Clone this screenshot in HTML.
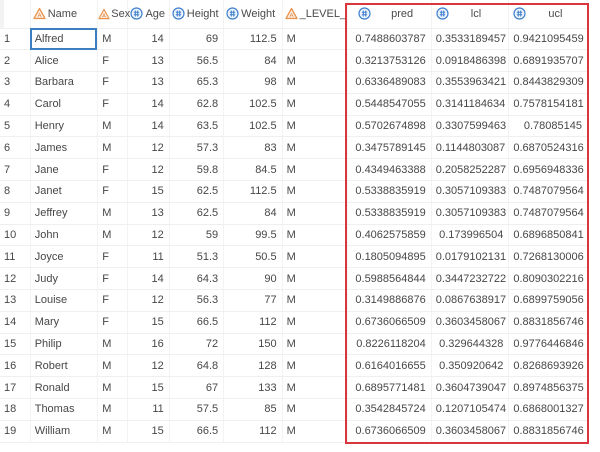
<!DOCTYPE html>
<html><head><meta charset="utf-8"><style>
*{margin:0;padding:0;box-sizing:border-box}
body{width:600px;height:452px;background:#fff;font-family:"Liberation Sans",Arial,sans-serif;font-size:11px;color:#474747;position:relative;overflow:hidden}
table{border-collapse:collapse;table-layout:fixed;position:absolute;left:0;top:0;width:588px}
td,th{height:21.8px;border-bottom:1px solid #efefef;border-right:1px solid #f3f3f3;white-space:nowrap;overflow:hidden;padding:0 4px;font-weight:normal}
th{height:28px;text-align:left;color:#4a4a4a;font-size:11px;padding:0 2px}
td.r{text-align:right;padding-right:5px}
.ic{display:inline-block;vertical-align:-3px;margin-right:2px}
.box{position:absolute;left:345px;top:3px;width:244px;height:441px;border:2px solid #d9363e}
.sel{position:absolute;left:30px;top:28px;width:67px;height:22px;border:2px solid #3c7fc1}
.side{position:absolute;left:0;top:0;width:4px;height:28px;background:#f3f3f3}
</style></head><body>
<div class="side"></div>
<table>
<colgroup><col style="width:30px"><col style="width:67px"><col style="width:30px"><col style="width:41px"><col style="width:54px"><col style="width:58px"><col style="width:65px"><col style="width:83px"><col style="width:77px"><col style="width:78px"></colgroup>
<tr><th></th>
<th><svg class="ic" width="13" height="13" viewBox="0 0 13 13"><path d="M6.5 1.5L12 11.5H1z" fill="#fdf0e6" stroke="#e8944e" stroke-width="1.3" stroke-linejoin="round"/><text x="6.5" y="10.5" font-size="6" text-anchor="middle" fill="#d9772a" font-family="Liberation Sans">A</text></svg>Name</th>
<th style="padding-left:0;overflow:visible"><svg class="ic" style="margin-right:1px" width="12" height="12" viewBox="0 0 13 13"><path d="M6.5 1.5L12 11.5H1z" fill="#fdf0e6" stroke="#e8944e" stroke-width="1.3" stroke-linejoin="round"/><text x="6.5" y="10.5" font-size="6" text-anchor="middle" fill="#d9772a" font-family="Liberation Sans">A</text></svg>Sex</th>
<th><svg class="ic" width="13" height="13" viewBox="0 0 13 13"><circle cx="6.5" cy="6.5" r="5.5" fill="#eef4fc" stroke="#3f7fcf" stroke-width="1.2"/><path d="M5.3 3.5v6M7.7 3.5v6M3.8 5.3h5.4M3.8 7.7h5.4" stroke="#3f7fcf" stroke-width="1"/></svg>Age</th>
<th><svg class="ic" width="13" height="13" viewBox="0 0 13 13"><circle cx="6.5" cy="6.5" r="5.5" fill="#eef4fc" stroke="#3f7fcf" stroke-width="1.2"/><path d="M5.3 3.5v6M7.7 3.5v6M3.8 5.3h5.4M3.8 7.7h5.4" stroke="#3f7fcf" stroke-width="1"/></svg>Height</th>
<th><svg class="ic" width="13" height="13" viewBox="0 0 13 13"><circle cx="6.5" cy="6.5" r="5.5" fill="#eef4fc" stroke="#3f7fcf" stroke-width="1.2"/><path d="M5.3 3.5v6M7.7 3.5v6M3.8 5.3h5.4M3.8 7.7h5.4" stroke="#3f7fcf" stroke-width="1"/></svg>Weight</th>
<th><svg class="ic" width="13" height="13" viewBox="0 0 13 13"><path d="M6.5 1.5L12 11.5H1z" fill="#fdf0e6" stroke="#e8944e" stroke-width="1.3" stroke-linejoin="round"/><text x="6.5" y="10.5" font-size="6" text-anchor="middle" fill="#d9772a" font-family="Liberation Sans">A</text></svg>_LEVEL_</th>
<th style="padding-left:10px"><svg class="ic" width="13" height="13" viewBox="0 0 13 13"><circle cx="6.5" cy="6.5" r="5.5" fill="#eef4fc" stroke="#3f7fcf" stroke-width="1.2"/><path d="M5.3 3.5v6M7.7 3.5v6M3.8 5.3h5.4M3.8 7.7h5.4" stroke="#3f7fcf" stroke-width="1"/></svg><span style="margin-left:18px">pred</span></th>
<th style="padding-left:4px"><svg class="ic" width="13" height="13" viewBox="0 0 13 13"><circle cx="6.5" cy="6.5" r="5.5" fill="#eef4fc" stroke="#3f7fcf" stroke-width="1.2"/><path d="M5.3 3.5v6M7.7 3.5v6M3.8 5.3h5.4M3.8 7.7h5.4" stroke="#3f7fcf" stroke-width="1"/></svg><span style="margin-left:20px">lcl</span></th>
<th style="padding-left:4px"><svg class="ic" width="13" height="13" viewBox="0 0 13 13"><circle cx="6.5" cy="6.5" r="5.5" fill="#eef4fc" stroke="#3f7fcf" stroke-width="1.2"/><path d="M5.3 3.5v6M7.7 3.5v6M3.8 5.3h5.4M3.8 7.7h5.4" stroke="#3f7fcf" stroke-width="1"/></svg><span style="margin-left:20px">ucl</span></th></tr>
<tr><td>1</td><td>Alfred</td><td>M</td><td class="r">14</td><td class="r">69</td><td class="r">112.5</td><td>M</td><td class="r">0.7488603787</td><td class="r">0.3533189457</td><td class="r">0.9421095459</td></tr>
<tr><td>2</td><td>Alice</td><td>F</td><td class="r">13</td><td class="r">56.5</td><td class="r">84</td><td>M</td><td class="r">0.3213753126</td><td class="r">0.0918486398</td><td class="r">0.6891935707</td></tr>
<tr><td>3</td><td>Barbara</td><td>F</td><td class="r">13</td><td class="r">65.3</td><td class="r">98</td><td>M</td><td class="r">0.6336489083</td><td class="r">0.3553963421</td><td class="r">0.8443829309</td></tr>
<tr><td>4</td><td>Carol</td><td>F</td><td class="r">14</td><td class="r">62.8</td><td class="r">102.5</td><td>M</td><td class="r">0.5448547055</td><td class="r">0.3141184634</td><td class="r">0.7578154181</td></tr>
<tr><td>5</td><td>Henry</td><td>M</td><td class="r">14</td><td class="r">63.5</td><td class="r">102.5</td><td>M</td><td class="r">0.5702674898</td><td class="r">0.3307599463</td><td class="r">0.78085145</td></tr>
<tr><td>6</td><td>James</td><td>M</td><td class="r">12</td><td class="r">57.3</td><td class="r">83</td><td>M</td><td class="r">0.3475789145</td><td class="r">0.1144803087</td><td class="r">0.6870524316</td></tr>
<tr><td>7</td><td>Jane</td><td>F</td><td class="r">12</td><td class="r">59.8</td><td class="r">84.5</td><td>M</td><td class="r">0.4349463388</td><td class="r">0.2058252287</td><td class="r">0.6956948336</td></tr>
<tr><td>8</td><td>Janet</td><td>F</td><td class="r">15</td><td class="r">62.5</td><td class="r">112.5</td><td>M</td><td class="r">0.5338835919</td><td class="r">0.3057109383</td><td class="r">0.7487079564</td></tr>
<tr><td>9</td><td>Jeffrey</td><td>M</td><td class="r">13</td><td class="r">62.5</td><td class="r">84</td><td>M</td><td class="r">0.5338835919</td><td class="r">0.3057109383</td><td class="r">0.7487079564</td></tr>
<tr><td>10</td><td>John</td><td>M</td><td class="r">12</td><td class="r">59</td><td class="r">99.5</td><td>M</td><td class="r">0.4062575859</td><td class="r">0.173996504</td><td class="r">0.6896850841</td></tr>
<tr><td>11</td><td>Joyce</td><td>F</td><td class="r">11</td><td class="r">51.3</td><td class="r">50.5</td><td>M</td><td class="r">0.1805094895</td><td class="r">0.0179102131</td><td class="r">0.7268130006</td></tr>
<tr><td>12</td><td>Judy</td><td>F</td><td class="r">14</td><td class="r">64.3</td><td class="r">90</td><td>M</td><td class="r">0.5988564844</td><td class="r">0.3447232722</td><td class="r">0.8090302216</td></tr>
<tr><td>13</td><td>Louise</td><td>F</td><td class="r">12</td><td class="r">56.3</td><td class="r">77</td><td>M</td><td class="r">0.3149886876</td><td class="r">0.0867638917</td><td class="r">0.6899759056</td></tr>
<tr><td>14</td><td>Mary</td><td>F</td><td class="r">15</td><td class="r">66.5</td><td class="r">112</td><td>M</td><td class="r">0.6736066509</td><td class="r">0.3603458067</td><td class="r">0.8831856746</td></tr>
<tr><td>15</td><td>Philip</td><td>M</td><td class="r">16</td><td class="r">72</td><td class="r">150</td><td>M</td><td class="r">0.8226118204</td><td class="r">0.329644328</td><td class="r">0.9776446846</td></tr>
<tr><td>16</td><td>Robert</td><td>M</td><td class="r">12</td><td class="r">64.8</td><td class="r">128</td><td>M</td><td class="r">0.6164016655</td><td class="r">0.350920642</td><td class="r">0.8268693926</td></tr>
<tr><td>17</td><td>Ronald</td><td>M</td><td class="r">15</td><td class="r">67</td><td class="r">133</td><td>M</td><td class="r">0.6895771481</td><td class="r">0.3604739047</td><td class="r">0.8974856375</td></tr>
<tr><td>18</td><td>Thomas</td><td>M</td><td class="r">11</td><td class="r">57.5</td><td class="r">85</td><td>M</td><td class="r">0.3542845724</td><td class="r">0.1207105474</td><td class="r">0.6868001327</td></tr>
<tr><td>19</td><td>William</td><td>M</td><td class="r">15</td><td class="r">66.5</td><td class="r">112</td><td>M</td><td class="r">0.6736066509</td><td class="r">0.3603458067</td><td class="r">0.8831856746</td></tr>
</table>
<div class="sel"></div>
<div class="box"></div>
</body></html>
